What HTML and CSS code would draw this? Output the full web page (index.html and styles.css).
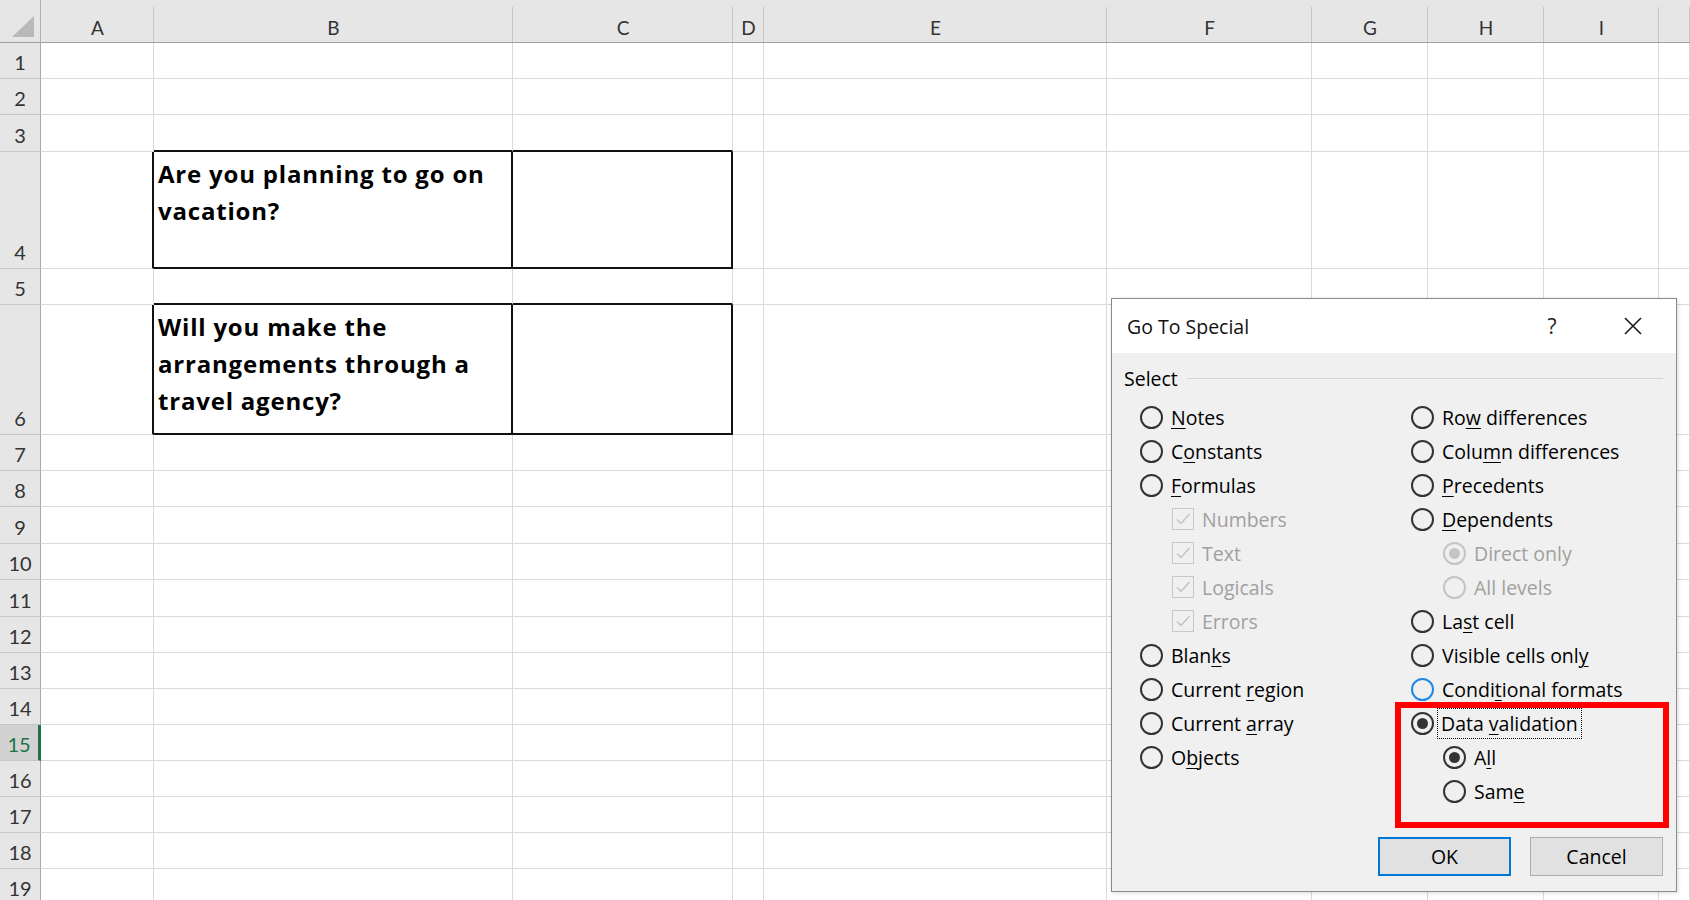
FILE: index.html
```html
<!DOCTYPE html>
<html>
<head>
<meta charset="utf-8">
<link rel="stylesheet" href="styles.css">
</head>
<body>
<div class="sheet">
  <div class="corner"><svg width="22" height="21" viewBox="0 0 22 21"><polygon points="22,0 22,21 0,21" fill="#b9b9b9"/></svg></div>
  <div class="ch">A</div><div class="ch">B</div><div class="ch">C</div><div class="ch">D</div><div class="ch">E</div><div class="ch">F</div><div class="ch">G</div><div class="ch">H</div><div class="ch">I</div><div class="ch"></div>

  <div class="rh">1</div><div class="c"></div><div class="c"></div><div class="c"></div><div class="c"></div><div class="c"></div><div class="c"></div><div class="c"></div><div class="c"></div><div class="c"></div><div class="c"></div>
  <div class="rh">2</div><div class="c"></div><div class="c"></div><div class="c"></div><div class="c"></div><div class="c"></div><div class="c"></div><div class="c"></div><div class="c"></div><div class="c"></div><div class="c"></div>
  <div class="rh">3</div><div class="c"></div><div class="c bb"></div><div class="c bb"></div><div class="c"></div><div class="c"></div><div class="c"></div><div class="c"></div><div class="c"></div><div class="c"></div><div class="c"></div>
  <div class="rh">4</div><div class="c br"></div><div class="c br bb txt">Are you planning to go on vacation?</div><div class="c br bb"></div><div class="c"></div><div class="c"></div><div class="c"></div><div class="c"></div><div class="c"></div><div class="c"></div><div class="c"></div>
  <div class="rh">5</div><div class="c"></div><div class="c bb"></div><div class="c bb"></div><div class="c"></div><div class="c"></div><div class="c"></div><div class="c"></div><div class="c"></div><div class="c"></div><div class="c"></div>
  <div class="rh">6</div><div class="c br"></div><div class="c br bb txt">Will you make the arrangements through a travel agency?</div><div class="c br bb"></div><div class="c"></div><div class="c"></div><div class="c"></div><div class="c"></div><div class="c"></div><div class="c"></div><div class="c"></div>
  <div class="rh">7</div><div class="c"></div><div class="c"></div><div class="c"></div><div class="c"></div><div class="c"></div><div class="c"></div><div class="c"></div><div class="c"></div><div class="c"></div><div class="c"></div>
  <div class="rh">8</div><div class="c"></div><div class="c"></div><div class="c"></div><div class="c"></div><div class="c"></div><div class="c"></div><div class="c"></div><div class="c"></div><div class="c"></div><div class="c"></div>
  <div class="rh">9</div><div class="c"></div><div class="c"></div><div class="c"></div><div class="c"></div><div class="c"></div><div class="c"></div><div class="c"></div><div class="c"></div><div class="c"></div><div class="c"></div>
  <div class="rh">10</div><div class="c"></div><div class="c"></div><div class="c"></div><div class="c"></div><div class="c"></div><div class="c"></div><div class="c"></div><div class="c"></div><div class="c"></div><div class="c"></div>
  <div class="rh">11</div><div class="c"></div><div class="c"></div><div class="c"></div><div class="c"></div><div class="c"></div><div class="c"></div><div class="c"></div><div class="c"></div><div class="c"></div><div class="c"></div>
  <div class="rh">12</div><div class="c"></div><div class="c"></div><div class="c"></div><div class="c"></div><div class="c"></div><div class="c"></div><div class="c"></div><div class="c"></div><div class="c"></div><div class="c"></div>
  <div class="rh">13</div><div class="c"></div><div class="c"></div><div class="c"></div><div class="c"></div><div class="c"></div><div class="c"></div><div class="c"></div><div class="c"></div><div class="c"></div><div class="c"></div>
  <div class="rh">14</div><div class="c"></div><div class="c"></div><div class="c"></div><div class="c"></div><div class="c"></div><div class="c"></div><div class="c"></div><div class="c"></div><div class="c"></div><div class="c"></div>
  <div class="rh active">15</div><div class="c"></div><div class="c"></div><div class="c"></div><div class="c"></div><div class="c"></div><div class="c"></div><div class="c"></div><div class="c"></div><div class="c"></div><div class="c"></div>
  <div class="rh">16</div><div class="c"></div><div class="c"></div><div class="c"></div><div class="c"></div><div class="c"></div><div class="c"></div><div class="c"></div><div class="c"></div><div class="c"></div><div class="c"></div>
  <div class="rh">17</div><div class="c"></div><div class="c"></div><div class="c"></div><div class="c"></div><div class="c"></div><div class="c"></div><div class="c"></div><div class="c"></div><div class="c"></div><div class="c"></div>
  <div class="rh">18</div><div class="c"></div><div class="c"></div><div class="c"></div><div class="c"></div><div class="c"></div><div class="c"></div><div class="c"></div><div class="c"></div><div class="c"></div><div class="c"></div>
  <div class="rh">19</div><div class="c"></div><div class="c"></div><div class="c"></div><div class="c"></div><div class="c"></div><div class="c"></div><div class="c"></div><div class="c"></div><div class="c"></div><div class="c"></div>
</div>

<div class="dialog">
  <div class="titlebar">
    <span class="title">Go To Special</span>
    <span class="help">?</span>
    <span class="close"><svg width="20" height="20" viewBox="0 0 20 20"><path d="M2 2 L18 18 M18 2 L2 18" stroke="#1a1a1a" stroke-width="1.6" fill="none"/></svg></span>
  </div>
  <div class="dbody">
    <div class="legend"><span>Select</span><span class="rule"></span></div>
    <div class="cols">
      <div class="col">
        <div class="opt"><span class="radio"></span><span><u>N</u>otes</span></div>
        <div class="opt"><span class="radio"></span><span>C<u>o</u>nstants</span></div>
        <div class="opt"><span class="radio"></span><span><u>F</u>ormulas</span></div>
        <div class="opt sub dis"><span class="chk"><svg width="20" height="20" viewBox="0 0 20 20"><path d="M4 10.5 L8 14.5 L16.5 5" stroke="#c2c2c2" stroke-width="1.4" fill="none"/></svg></span><span>Numbers</span></div>
        <div class="opt sub dis"><span class="chk"><svg width="20" height="20" viewBox="0 0 20 20"><path d="M4 10.5 L8 14.5 L16.5 5" stroke="#c2c2c2" stroke-width="1.4" fill="none"/></svg></span><span>Text</span></div>
        <div class="opt sub dis"><span class="chk"><svg width="20" height="20" viewBox="0 0 20 20"><path d="M4 10.5 L8 14.5 L16.5 5" stroke="#c2c2c2" stroke-width="1.4" fill="none"/></svg></span><span>Logicals</span></div>
        <div class="opt sub dis"><span class="chk"><svg width="20" height="20" viewBox="0 0 20 20"><path d="M4 10.5 L8 14.5 L16.5 5" stroke="#c2c2c2" stroke-width="1.4" fill="none"/></svg></span><span>Errors</span></div>
        <div class="opt"><span class="radio"></span><span>Blan<u>k</u>s</span></div>
        <div class="opt"><span class="radio"></span><span>Current <u>r</u>egion</span></div>
        <div class="opt"><span class="radio"></span><span>Current <u>a</u>rray</span></div>
        <div class="opt"><span class="radio"></span><span>O<u>b</u>jects</span></div>
      </div>
      <div class="col">
        <div class="opt"><span class="radio"></span><span>Ro<u>w</u> differences</span></div>
        <div class="opt"><span class="radio"></span><span>Colu<u>m</u>n differences</span></div>
        <div class="opt"><span class="radio"></span><span><u>P</u>recedents</span></div>
        <div class="opt"><span class="radio"></span><span><u>D</u>ependents</span></div>
        <div class="opt sub dis"><span class="radio on"></span><span>Direct only</span></div>
        <div class="opt sub dis"><span class="radio"></span><span>All levels</span></div>
        <div class="opt"><span class="radio"></span><span>La<u>s</u>t cell</span></div>
        <div class="opt"><span class="radio"></span><span>Visible cells onl<u>y</u></span></div>
        <div class="opt"><span class="radio hover"></span><span>Condi<u>t</u>ional formats</span></div>
        <div class="opt"><span class="radio on"></span><span class="focus">Data <u>v</u>alidation</span></div>
        <div class="opt sub"><span class="radio on"></span><span>A<u>l</u>l</span></div>
        <div class="opt sub"><span class="radio"></span><span>Sam<u>e</u></span></div>
      </div>
    </div>
    <div class="buttons">
      <button class="btn default">OK</button>
      <button class="btn">Cancel</button>
    </div>
  </div>
  <div class="highlight"></div>
</div>
</body>
</html>
```

FILE: styles.css
```css
html, body {
  margin: 0;
  padding: 0;
}
body {
  width: 1690px;
  height: 900px;
  overflow: hidden;
  background: #fff;
  position: relative;
  font-family: "Lato", "Liberation Sans", sans-serif;
}
.sheet {
  display: grid;
  grid-template-columns: 41px 113px 359px 220px 31px 343px 205px 116px 116px 115px 1fr;
  grid-template-rows: 43px 36px 36px 37px 117px 36px 130px 36px 36px 37px 36px 37px 36px 36px 36px 36px 36px 36px 36px 36px;
  width: 1690px;
}
.sheet > div {
  box-sizing: border-box;
}
.corner {
  background: #e6e6e6;
  border-right: 1px solid #b0b0b0;
  border-bottom: 1px solid #a0a0a0;
  display: flex;
  align-items: flex-end;
  justify-content: flex-end;
  padding: 0 6px 5px 0;
}
.corner svg { display: block; }
.ch {
  background: linear-gradient(#c6c6c6, #c6c6c6) right bottom / 1px 35px no-repeat, #e6e6e6;
  border-bottom: 1px solid #a0a0a0;
  display: flex;
  align-items: center;
  justify-content: center;
  padding-top: 12px;
  font-size: 19px;
  color: #333;
}
.rh {
  background: #e6e6e6;
  border-right: 1px solid #a8a8a8;
  border-bottom: 1px solid #c6c6c6;
  display: flex;
  align-items: flex-end;
  justify-content: center;
  padding-bottom: 4px;
  font-size: 20px;
  color: #333;
  line-height: 24px;
}
.rh.active {
  background: #d2d2d2;
  color: #217346;
  border-right: 3px solid #217346;
}
.c {
  border-right: 1px solid #dadada;
  border-bottom: 1px solid #dadada;
}
.c.br { border-right: 2px solid #111; }
.c.bb { border-bottom: 2px solid #111; }
.txt {
  font-family: "Open Sans", "Noto Sans", sans-serif;
  font-weight: bold;
  font-size: 24px;
  letter-spacing: 0.8px;
  line-height: 37px;
  padding: 3px 4px 0 4px;
  color: #000;
}

/* dialog */
.dialog {
  position: absolute;
  left: 1111px;
  top: 298px;
  width: 566px;
  height: 594px;
  box-sizing: border-box;
  border: 1px solid #8a8a8a;
  background: #f0f0f0;
  font-family: "Open Sans", "Noto Sans", sans-serif;
  font-size: 19.5px;
  color: #000;
  box-shadow: 1px 1px 4px rgba(0,0,0,0.15);
}
.titlebar {
  height: 54px;
  background: #fff;
  display: flex;
  align-items: center;
  padding-left: 15px;
}
.title {
  flex: 1;
  font-size: 19.5px;
  color: #111;
}
.help {
  width: 20px;
  text-align: center;
  margin-right: 51px;
  font-size: 21px;
  color: #222;
}
.close {
  width: 40px;
  margin-right: 23px;
  display: flex;
  justify-content: center;
}
.close svg { display: block; }
.dbody {
  padding: 0 13px 0 12px;
}
.legend {
  height: 47px;
  display: flex;
  align-items: center;
  padding-top: 4px;
  box-sizing: border-box;
}
.legend .rule {
  flex: 1;
  height: 0;
  border-top: 1px solid #d6d6d6;
  margin-left: 9px;
}
.cols {
  display: grid;
  grid-template-columns: 271px 1fr;
  padding-left: 16px;
}
.opt {
  height: 34px;
  display: flex;
  align-items: center;
  white-space: nowrap;
}
.opt.sub { padding-left: 32px; }
.opt.dis { color: #a0a0a0; }
.radio {
  width: 23px;
  height: 23px;
  box-sizing: border-box;
  border: 2px solid #333;
  border-radius: 50%;
  margin-right: 8px;
  display: flex;
  align-items: center;
  justify-content: center;
  flex-shrink: 0;
}
.radio.on::after {
  content: "";
  width: 11px;
  height: 11px;
  border-radius: 50%;
  background: #333;
}
.radio.hover { border-color: #1e88e5; }
.dis .radio { border-color: #c4c4c4; }
.dis .radio.on::after { background: #c4c4c4; }
.chk {
  width: 22px;
  height: 22px;
  box-sizing: border-box;
  border: 1px solid #c8c8c8;
  margin-right: 8px;
  display: flex;
  align-items: center;
  justify-content: center;
  flex-shrink: 0;
}
.chk svg { display: block; }
.focus {
  outline: 1px dotted #000;
  outline-offset: 0;
  padding: 1px 3px;
  margin-left: -4px;
}
u { text-underline-offset: 3px; text-decoration-thickness: 1px; }
.buttons {
  display: flex;
  justify-content: flex-end;
  gap: 19px;
  margin-top: 29px;
}
.btn {
  width: 133px;
  height: 39px;
  box-sizing: border-box;
  background: #e1e1e1;
  border: 1px solid #adadad;
  font-family: "Open Sans", "Noto Sans", sans-serif;
  font-size: 19.5px;
  color: #000;
  padding: 0;
}
.btn.default {
  border: 2px solid #0078d7;
}
.highlight {
  position: absolute;
  left: 283px;
  top: 403px;
  width: 274px;
  height: 126px;
  box-sizing: border-box;
  border: 6px solid #ff0000;
  pointer-events: none;
}
```
